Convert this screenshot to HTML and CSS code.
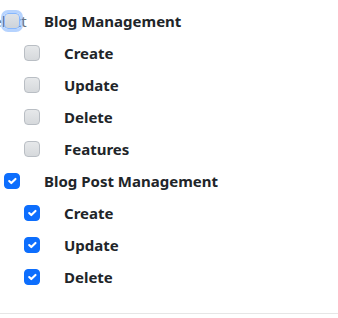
FILE: index.html
```html
<!DOCTYPE html>
<html lang="en">
<head>
<meta charset="UTF-8" />
<title>Permissions</title>
<link rel="stylesheet" href="styles.css">
</head>
<body>
  <div class="perm-list">
    <div class="group">
      <div class="row parent">
        <span class="ghost">Select</span>
        <input type="checkbox" class="check focused" id="blog">
        <label for="blog">Blog Management</label>
      </div>
      <div class="row child"><input type="checkbox" class="check" id="b1"><label for="b1">Create</label></div>
      <div class="row child"><input type="checkbox" class="check" id="b2"><label for="b2">Update</label></div>
      <div class="row child"><input type="checkbox" class="check" id="b3"><label for="b3">Delete</label></div>
      <div class="row child"><input type="checkbox" class="check" id="b4"><label for="b4">Features</label></div>
    </div>
    <div class="group">
      <div class="row parent"><input type="checkbox" class="check" id="post" checked><label for="post">Blog Post Management</label></div>
      <div class="row child"><input type="checkbox" class="check" id="p1" checked><label for="p1">Create</label></div>
      <div class="row child"><input type="checkbox" class="check" id="p2" checked><label for="p2">Update</label></div>
      <div class="row child"><input type="checkbox" class="check" id="p3" checked><label for="p3">Delete</label></div>
    </div>
  </div>
  <hr class="divider">
</body>
</html>
```

FILE: styles.css
```css
* {
  box-sizing: border-box;
}

body {
  margin: 0;
  background: #fff;
  color: #212529;
  font-family: 'Noto Sans', 'Open Sans', sans-serif;
  font-size: 15px;
  font-weight: 700;
}

.perm-list {
  padding-top: 5px;
}

.row {
  display: flex;
  align-items: center;
  height: 32px;
  position: relative;
}

.parent {
  padding-left: 4px;
}

.child {
  padding-left: 24px;
}

.check {
  appearance: none;
  -webkit-appearance: none;
  width: 16px;
  height: 16px;
  margin: 0 24px 0 0;
  flex: none;
  border: 1px solid #b9bec4;
  border-radius: 4px;
  background: linear-gradient(#e6e8ea, #d6d9dc);
  position: relative;
  z-index: 1;
}

.check:checked {
  background-color: #0d6efd;
  border-color: #0d6efd;
  background-image: url("data:image/svg+xml,%3csvg xmlns='http://www.w3.org/2000/svg' viewBox='0 0 20 20'%3e%3cpath fill='none' stroke='%23fff' stroke-linecap='round' stroke-linejoin='round' stroke-width='3' d='M6 10l3 3l6-6'/%3e%3c/svg%3e");
  background-size: 100% 100%;
}

.focused {
  box-shadow: 0 0 0 3px rgba(13, 110, 253, 0.3);
  background: linear-gradient(#dfe3e8, #cdd3da);
  border-color: #86b7fe;
}

.ghost {
  position: absolute;
  left: -15px;
  top: 6px;
  font-weight: 400;
  color: #6c757d;
  font-size: 15px;
}

label {
  white-space: nowrap;
}

.divider {
  border: 0;
  border-top: 1px solid #e6e6e6;
  margin: 20px 0 0;
}
```
